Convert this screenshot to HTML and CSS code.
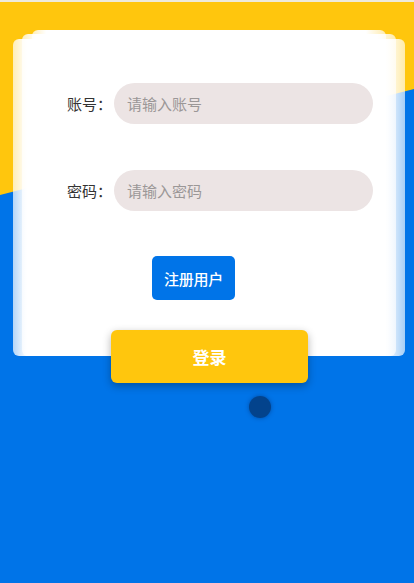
FILE: index.html
```html
<!DOCTYPE html>
<html lang="zh-CN">
<head>
    <meta charset="UTF-8">
    <meta name="viewport" content="width=device-width, initial-scale=1.0">
    <title>登录</title>
    <link rel="stylesheet" href="styles.css">
</head>
<body>
    <div class="bg"></div>
    <div class="page">
        <div class="stack">
            <div class="layer layer-a"></div>
            <div class="layer layer-b"></div>
            <div class="layer card">
                <div class="row">
                    <label class="label" for="account">账号：</label>
                    <input class="field" type="text" id="account" placeholder="请输入账号">
                </div>
                <div class="row">
                    <label class="label" for="password">密码：</label>
                    <input class="field" type="password" id="password" placeholder="请输入密码">
                </div>
                <button class="button register">注册用户</button>
            </div>
        </div>
        <button class="button login">登录</button>
        <div class="dot"></div>
    </div>
</body>
</html>
```

FILE: styles.css
```css
body {
    margin: 0;
    min-height: 583px;
    background-color: #0074e8;
    font-family: "Noto Sans CJK SC", "Noto Sans", sans-serif;
    position: relative;
    overflow: hidden;
}
.bg {
    position: absolute;
    top: 0;
    left: 0;
    right: 0;
    height: 200px;
    background-color: #ffc60d;
    border-top: 2px solid #eeeadb;
    clip-path: polygon(0 0, 100% 0, 100% 89px, 0 195px);
}
.page {
    position: relative;
    padding-top: 30px;
}
.stack {
    display: grid;
}
.layer {
    grid-area: 1 / 1;
    border-radius: 6px;
    background: linear-gradient(to right, rgba(255,255,255,0.7), #fff 14px, #fff calc(100% - 20px), rgba(255,255,255,0.65));
}
.layer-a {
    margin: 0 28px 0 32px;
}
.layer-b {
    margin: 4px 18px 0 22px;
}
.card {
    margin: 9px 9px 0 13px;
    height: 317px;
    box-sizing: border-box;
    padding: 44px 0 0 0;
    display: flex;
    flex-direction: column;
}
.row {
    display: flex;
    align-items: center;
    margin-bottom: 46px;
}
.label {
    width: 99px;
    text-align: right;
    font-size: 15px;
    color: #333;
    margin-right: 2px;
}
.field {
    width: 259px;
    height: 41px;
    box-sizing: border-box;
    border: none;
    border-radius: 21px;
    background-color: #ece4e4;
    padding: 0 13px;
    font-family: inherit;
    font-size: 15px;
    color: #333;
    outline: none;
}
.field::placeholder {
    color: #9b9797;
}
.button {
    border: none;
    color: white;
    font-family: inherit;
    cursor: pointer;
}
.register {
    align-self: flex-start;
    margin: -1px 0 0 139px;
    width: 83px;
    height: 44px;
    border-radius: 5px;
    background-color: #0074e8;
    font-size: 15px;
    font-weight: 500;
    letter-spacing: -0.3px;
    padding: 0;
}
.login {
    display: block;
    position: relative;
    margin: -26px 0 0 111px;
    width: 197px;
    height: 53px;
    border-radius: 6px;
    background-color: #ffc60d;
    font-size: 17px;
    font-weight: bold;
    box-shadow: 0 3px 8px rgba(0,0,0,0.3);
}
.dot {
    margin: 13px 0 0 249px;
    width: 22px;
    height: 22px;
    border-radius: 50%;
    background-color: #03438c;
    box-shadow: 0 0 4px rgba(0,40,100,0.5);
}
```
